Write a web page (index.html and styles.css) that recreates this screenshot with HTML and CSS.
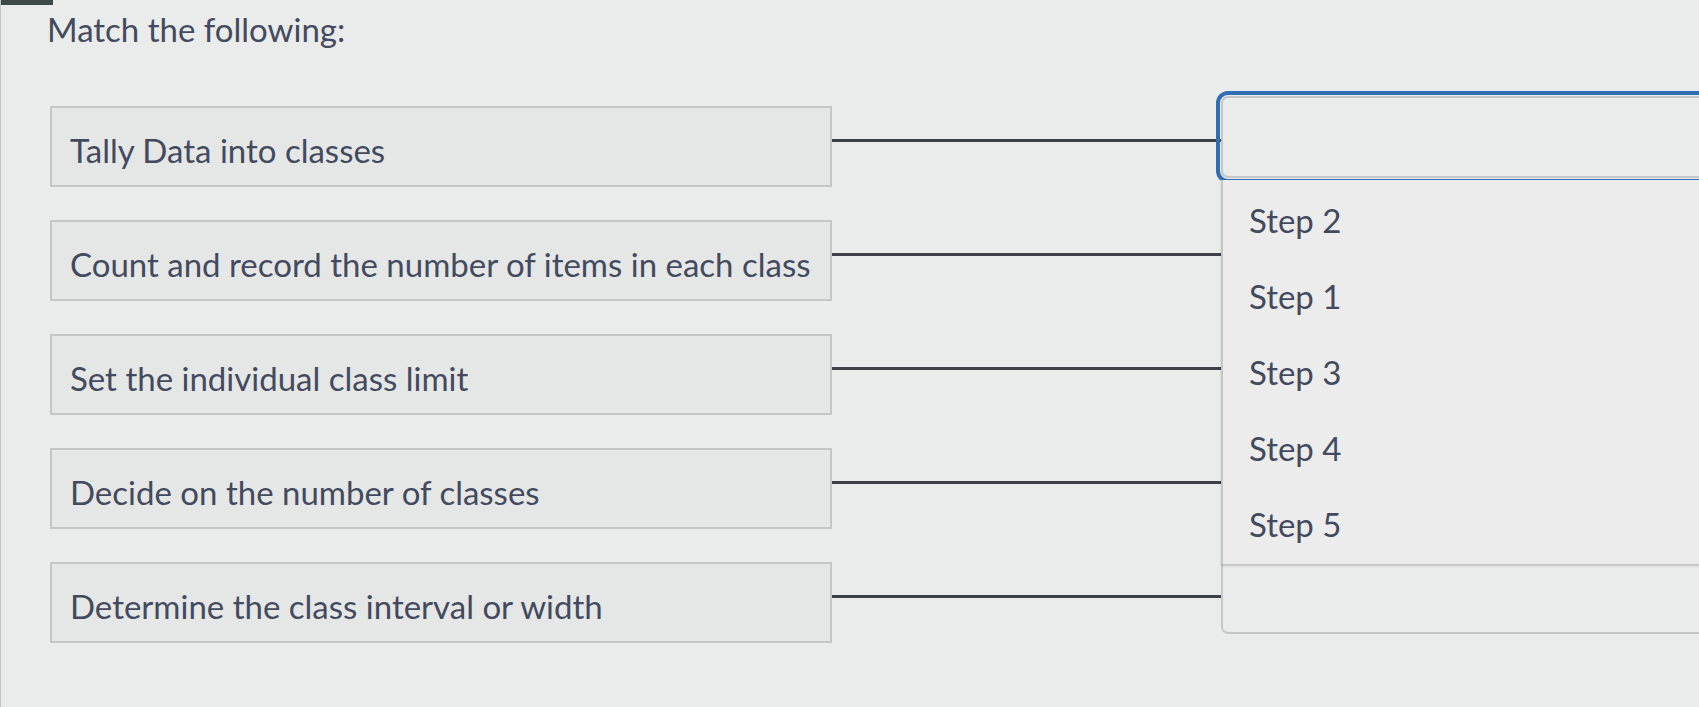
FILE: index.html
```html
<!DOCTYPE html>
<html lang="en">
<head>
    <meta charset="UTF-8">
    <meta name="viewport" content="width=device-width, initial-scale=1.0">
    <title>Match the following</title>
    <link rel="stylesheet" href="styles.css">
</head>
<body>

<div class="corner-tab"></div>

<main class="quiz">
    <h1 class="prompt">Match the following:</h1>

    <div class="match">
        <div class="row">
            <div class="term">Tally Data into classes</div>
            <span class="wire"></span>
            <div class="slot is-focused"></div>
        </div>
        <div class="row">
            <div class="term">Count and record the number of items in each class</div>
            <span class="wire"></span>
            <div class="slot"></div>
        </div>
        <div class="row">
            <div class="term">Set the individual class limit</div>
            <span class="wire"></span>
            <div class="slot"></div>
        </div>
        <div class="row">
            <div class="term">Decide on the number of classes</div>
            <span class="wire"></span>
            <div class="slot"></div>
        </div>
        <div class="row">
            <div class="term">Determine the class interval or width</div>
            <span class="wire"></span>
            <div class="slot"></div>
        </div>

        <ul class="menu">
            <li>Step 2</li>
            <li>Step 1</li>
            <li>Step 3</li>
            <li>Step 4</li>
            <li>Step 5</li>
        </ul>
    </div>
</main>

</body>
</html>
```

FILE: styles.css
```css
:root {
    --bg: #eaebeb;
    --box: #e5e6e6;
    --line: #c4c6c8;
    --text: #434a5e;
    --wire: #3c4148;
    --focus: #2f6eb5;
}
body {
    margin: 0;
    background: var(--bg);
    color: var(--text);
    font-family: Lato, "Open Sans", sans-serif;
    overflow: hidden;
    border-left: 1px solid #c2c4c6;
    min-height: 100vh;
    box-sizing: border-box;
}
.corner-tab {
    width: 52px;
    height: 5px;
    background: #3b4a49;
}
.quiz { padding-left: 49px; }
.prompt {
    margin: 5px 0 0 -3px;
    font-size: 33px;
    font-weight: 400;
    line-height: 1.2;
}
.match {
    position: relative;
    margin-top: 46px;
    display: flex;
    flex-direction: column;
    gap: 22px;
}
.row {
    display: flex;
    align-items: flex-start;
    height: 92px;
}
.term {
    flex: 0 0 782px;
    height: 81px;
    margin-top: 10px;
    box-sizing: border-box;
    display: flex;
    align-items: center;
    padding: 8px 0 0 18px;
    background: var(--box);
    border: 2px solid var(--line);
    font-size: 33px;
}
.wire {
    flex: 0 0 389px;
    height: 3px;
    margin-top: 43px;
    background: var(--wire);
}
.slot {
    flex: 0 0 500px;
    height: 82px;
    box-sizing: border-box;
    border: 2px solid var(--line);
    border-radius: 7px;
    background: var(--bg);
}
.slot.is-focused {
    outline: 4px solid var(--focus);
    outline-offset: 1px;
}
.menu {
    position: absolute;
    left: 1171px;
    top: 84px;
    width: 560px;
    margin: 0;
    padding: 2px 0 2px;
    list-style: none;
    background: #ececec;
    border-left: 2px solid var(--line);
    box-shadow: 0 2px 2px rgba(0,0,0,0.18);
}
.menu li {
    height: 76px;
    line-height: 76px;
    padding-left: 26px;
    font-size: 33px;
}
```
